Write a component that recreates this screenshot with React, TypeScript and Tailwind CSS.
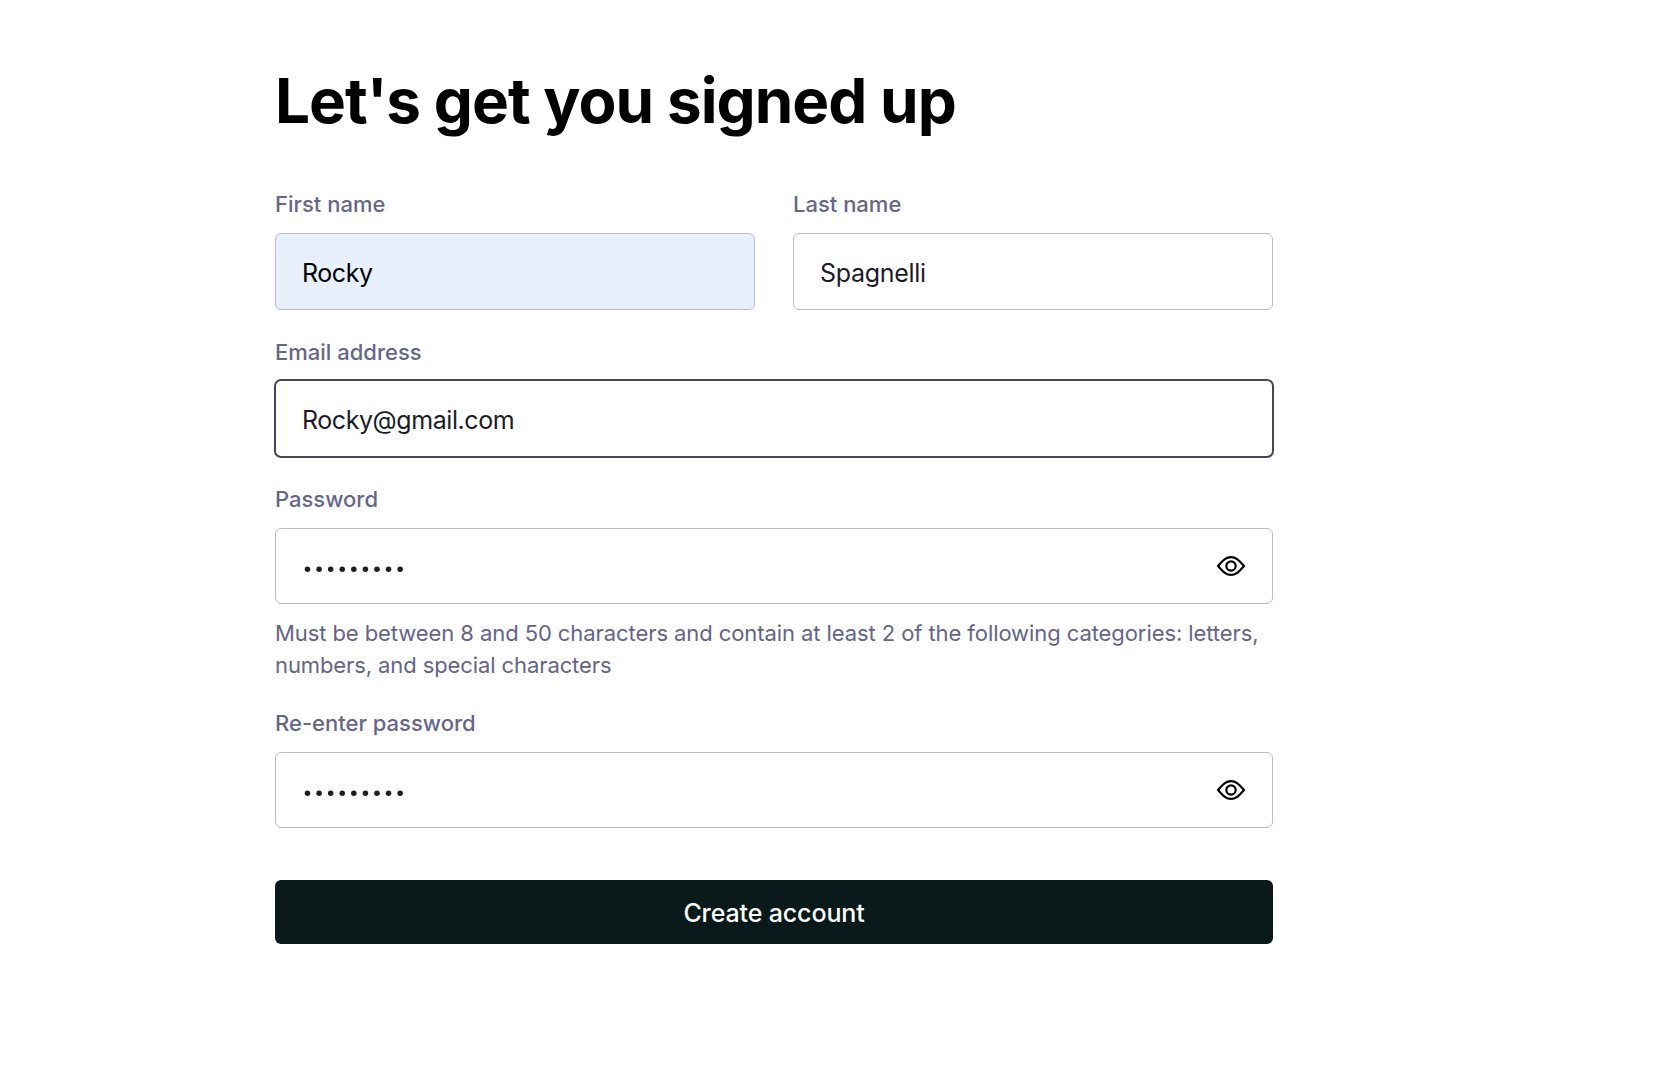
import type { ReactNode } from 'react';

function EyeIcon() {
  return (
    <svg width="30" height="22" viewBox="0 0 30 22" fill="none" stroke="#000" strokeWidth="2.2" strokeLinejoin="round" className="shrink-0">
      <path d="M2 11C7.500 4.600 10.500 2.100 15 2.100S22.500 4.600 28 11C22.500 17.400 19.500 19.900 15 19.900S7.500 17.400 2 11Z" />
      <circle cx="15" cy="11" r="4.700" />
    </svg>
  );
}

function Label({ children }: { children: ReactNode }) {
  return <label className="block text-[22px] leading-8 font-medium text-[#666688] whitespace-nowrap">{children}</label>;
}

function PasswordBox() {
  return (
    <div className="mt-[13px] flex h-[76px] items-center justify-between rounded-md border border-[#b9b9d0] bg-white pr-[26px] pl-[28px]">
      <svg width="102" height="8" viewBox="0 0 102 8" fill="#1c1c28" className="mt-[5px]">
        {Array.from({ length: 9 }, (_, i) => (
          <circle key={i} cx={3.5 + i * 11.58} cy="4.200" r="2.750" />
        ))}
      </svg>
      <button type="button" aria-label="Show password">
        <EyeIcon />
      </button>
    </div>
  );
}

export default function App() {
  return (
    <main className="min-h-[1082px] bg-white pt-[65px] pl-[275px] font-['Inter',sans-serif]">
      <form className="w-[998px]">
        <h1 className="text-[62px] leading-[72px] font-bold tracking-[-0.98px] whitespace-nowrap text-black">Let's get you signed up</h1>

        <div className="mt-[51px] grid grid-cols-2 gap-[38px]">
          <div>
            <Label>First name</Label>
            <div className="mt-[13px] flex h-[77px] items-center rounded-md border border-[#b9b9d0] bg-[#e8effd] pt-[5px] pl-[26px] text-[25px] text-black">
              <span className="tracking-[-0.45px]">Rocky</span>
            </div>
          </div>
          <div>
            <Label>Last name</Label>
            <div className="mt-[13px] flex h-[77px] items-center rounded-md border border-[#b9b9d0] bg-white pt-[5px] pl-[26px] text-[25px] text-[#1c1c28]">
              <span className="tracking-[-0.3px]">Spagnelli</span>
            </div>
          </div>
        </div>

        <div className="mt-[26px]">
          <Label>Email address</Label>
          <div className="-mx-px mt-[11px] flex h-[79px] items-center rounded-[7px] border-2 border-[#45455f] bg-white pt-[5px] pl-[26px] text-[25px] text-[#1c1c28]">
            <span className="tracking-[-0.43px]">Rocky@gmail.com</span>
          </div>
        </div>

        <div className="mt-[25px]">
          <Label>Password</Label>
          <PasswordBox />
          <p className="mt-[13px] text-[22px] leading-8 tracking-[-0.08px] whitespace-nowrap text-[#646487]">
            <span className="block">Must be between 8 and 50 characters and contain at least 2 of the following categories: letters,</span>
            <span className="block tracking-[-0.1px]">numbers, and special characters</span>
          </p>
        </div>

        <div className="mt-[26px]">
          <Label>Re-enter password</Label>
          <PasswordBox />
        </div>

        <button type="button" className="mt-[52px] flex h-16 w-full items-center justify-center rounded-md bg-[#0a1a1b] pt-[4px] text-[25px] font-medium text-white">
          <span className="tracking-[-0.13px]">Create account</span>
        </button>
      </form>
    </main>
  );
}
